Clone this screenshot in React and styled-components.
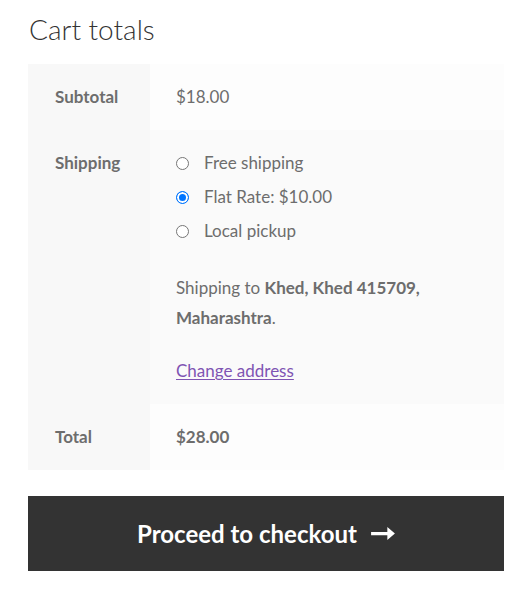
import React from "react";
import styled, { createGlobalStyle } from "styled-components";

const GlobalStyle = createGlobalStyle`
  body {
    margin: 0;
    background: #fff;
    font-family: "Lato", "Liberation Sans", sans-serif;
    color: #6d6d6d;
  }
`;

const Page = styled.div`
  padding: 12px 0 0 28px;
  width: 476px;
`;

const Heading = styled.h2`
  margin: 0 0 18px;
  font-size: 28px;
  font-weight: 300;
  color: #333;
  line-height: 34px;
  padding-left: 1px;
`;

const Table = styled.div`
  display: grid;
  grid-template-columns: 122px 1fr;
`;

const Label = styled.div`
  background: #f8f8f8;
  padding: 20px 26px 20px 27px;
  font-weight: 700;
  font-size: 17px;
  line-height: 26px;
`;

const Value = styled.div`
  background: ${p => (p.$alt ? "#fafafa" : "#fdfdfd")};
  padding: 20px 26px 20px;
  font-size: 17px;
  line-height: 26px;
  font-weight: ${p => (p.$strong ? 700 : 400)};
`;

const Methods = styled.ul`
  list-style: none;
  margin: 0 0 29px;
  padding: 0;
  display: flex;
  flex-direction: column;
  gap: 8px;
`;

const Method = styled.li`
  display: flex;
  align-items: center;
  gap: 15px;
`;

const Radio = styled.span`
  width: 13px;
  height: 13px;
  border-radius: 50%;
  box-sizing: border-box;
  border: 1px solid ${p => (p.$checked ? "#0075ff" : "#767676")};
  background: ${p => (p.$checked ? "#0075ff" : "#fff")};
  box-shadow: ${p => (p.$checked ? "inset 0 0 0 2px #fff" : "none")};
  flex: none;
`;

const Destination = styled.p`
  margin: 0 0 25px;
  line-height: 30px;
  strong { font-weight: 700; }
`;

const ChangeLink = styled.a`
  color: #7f54b3;
  text-decoration: underline;
  text-underline-offset: 2px;
`;

const Checkout = styled.a`
  margin-top: 26px;
  display: flex;
  align-items: center;
  justify-content: center;
  gap: 14px;
  height: 75px;
  background: #333;
  color: #fff;
  font-size: 24px;
  font-weight: 700;
  text-decoration: none;
`;

const Arrow = styled.svg`
  width: 24px;
  height: 13px;
`;

const methods = [
  { label: "Free shipping" },
  { label: "Flat Rate: $10.00", checked: true },
  { label: "Local pickup" },
];

export default function App() {
  return (
    <>
      <GlobalStyle />
      <Page>
        <Heading>Cart totals</Heading>
        <Table>
          <Label>Subtotal</Label>
          <Value>$18.00</Value>
          <Label>Shipping</Label>
          <Value $alt>
            <Methods>
              {methods.map(m => (
                <Method key={m.label}>
                  <Radio $checked={m.checked} />
                  {m.label}
                </Method>
              ))}
            </Methods>
            <Destination>
              Shipping to <strong>Khed, Khed 415709, Maharashtra</strong>.
            </Destination>
            <ChangeLink href="#">Change address</ChangeLink>
          </Value>
          <Label>Total</Label>
          <Value $strong>$28.00</Value>
        </Table>
        <Checkout href="#">
          Proceed to checkout
          <Arrow viewBox="0 0 22 12">
            <path d="M0 4.5h15V0l7 6-7 6V7.5H0z" fill="#fff" />
          </Arrow>
        </Checkout>
      </Page>
    </>
  );
}
